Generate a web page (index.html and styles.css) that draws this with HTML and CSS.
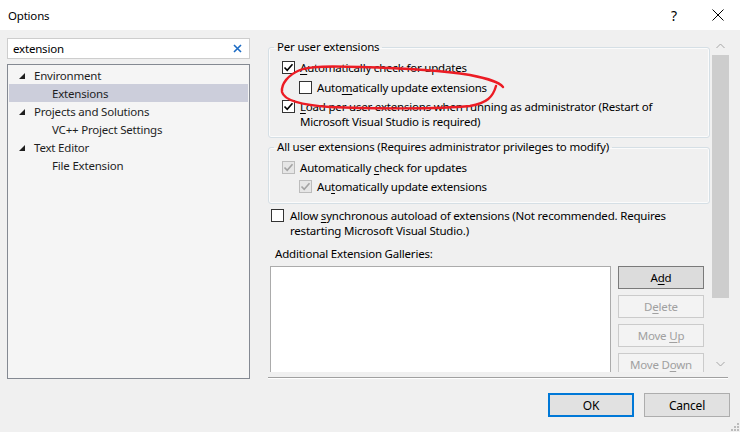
FILE: index.html
```html
<!DOCTYPE html>
<html>
<head>
<meta charset="utf-8">
<link rel="stylesheet" href="styles.css">
</head>
<body>
<div class="window">
  <div class="titlebar">
    <span class="title">Options</span>
    <span class="cap help">?</span>
    <span class="cap close"><svg width="12" height="12" viewBox="0 0 12 12"><path d="M0.5 0.5 L11.5 11.5 M11.5 0.5 L0.5 11.5" stroke="#000" stroke-width="1"/></svg></span>
  </div>
  <div class="main">
    <div class="left">
      <div class="search">
        <span class="search-text">extension</span>
        <svg class="clear" width="9" height="9" viewBox="0 0 9 9"><path d="M1 1 L8 8 M8 1 L1 8" stroke="#1c6bc4" stroke-width="1.6"/></svg>
      </div>
      <div class="tree">
        <div class="node"><svg class="tri" width="6" height="6" viewBox="0 0 6 6"><polygon points="6,0 6,6 0,6" fill="#1e1e1e"/></svg><span>Environment</span></div>
        <div class="node child selected"><span>Extensions</span></div>
        <div class="node"><svg class="tri" width="6" height="6" viewBox="0 0 6 6"><polygon points="6,0 6,6 0,6" fill="#1e1e1e"/></svg><span>Projects and Solutions</span></div>
        <div class="node child"><span>VC++ Project Settings</span></div>
        <div class="node"><svg class="tri" width="6" height="6" viewBox="0 0 6 6"><polygon points="6,0 6,6 0,6" fill="#1e1e1e"/></svg><span>Text Editor</span></div>
        <div class="node child"><span>File Extension</span></div>
      </div>
    </div>
    <div class="right">
      <div class="viewport">
        <div class="content">
          <fieldset class="group g1">
            <legend>Per user extensions</legend>
            <div class="row r1"><span class="cb checked"><svg viewBox="0 0 11 11" width="11" height="11"><path d="M1.5 5.5 L4.2 8.3 L9.5 2.2" fill="none" stroke="#000" stroke-width="1.6"/></svg></span><span class="lbl"><u>A</u>utomatically check for updates</span></div>
            <div class="row r2 sub"><span class="cb"></span><span class="lbl">Auto<u>m</u>atically update extensions</span></div>
            <div class="row r3"><span class="cb checked"><svg viewBox="0 0 11 11" width="11" height="11"><path d="M1.5 5.5 L4.2 8.3 L9.5 2.2" fill="none" stroke="#000" stroke-width="1.6"/></svg></span><span class="lbl"><u>L</u>oad per user extensions when running as administrator (Restart of<br>Microsoft Visual Studio is required)</span></div>
          </fieldset>
          <fieldset class="group g2">
            <legend>All user extensions (Requires administrator privileges to modify)</legend>
            <div class="row r1"><span class="cb disabled"><svg viewBox="0 0 11 11" width="11" height="11"><path d="M1.5 5.5 L4.2 8.3 L9.5 2.2" fill="none" stroke="#a3a3a3" stroke-width="1.6"/></svg></span><span class="lbl">Automatically <u>c</u>heck for updates</span></div>
            <div class="row r2 sub"><span class="cb disabled"><svg viewBox="0 0 11 11" width="11" height="11"><path d="M1.5 5.5 L4.2 8.3 L9.5 2.2" fill="none" stroke="#a3a3a3" stroke-width="1.6"/></svg></span><span class="lbl">Au<u>t</u>omatically update extensions</span></div>
          </fieldset>
          <div class="row sync"><span class="cb"></span><span class="lbl">Allow <u>s</u>ynchronous autoload of extensions (Not recommended. Requires<br>restarting Microsoft Visual Studio.)</span></div>
          <div class="galleries-label">Additional Extension Galleries:</div>
          <div class="galleries">
            <div class="listbox"></div>
            <div class="btncol">
              <div class="btn add"><span>A<u>d</u>d</span></div>
              <div class="btn off"><span>D<u>e</u>lete</span></div>
              <div class="btn off"><span>Move <u>U</u>p</span></div>
              <div class="btn off"><span>Move D<u>o</u>wn</span></div>
            </div>
          </div>
        </div>
        <div class="scrollbar">
          <div class="arrow"><svg width="9" height="6" viewBox="0 0 9 6"><path d="M0.5 5 L4.5 1 L8.5 5" fill="none" stroke="#a6a6a6" stroke-width="1"/></svg></div>
          <div class="thumb"></div>
          <div class="track"></div>
          <div class="arrow"><svg width="9" height="6" viewBox="0 0 9 6"><path d="M0.5 1 L4.5 5 L8.5 1" fill="none" stroke="#a6a6a6" stroke-width="1"/></svg></div>
        </div>
      </div>
      <div class="separator"></div>
    </div>
  </div>
  <div class="footer">
    <div class="dbtn ok"><span>OK</span></div>
    <div class="dbtn"><span>Cancel</span></div>
  </div>
  <svg class="grip" width="8" height="8" viewBox="0 0 8 8">
    <rect x="6" y="0" width="2" height="2" fill="#bcbcbc"/>
    <rect x="3" y="3" width="2" height="2" fill="#bcbcbc"/>
    <rect x="6" y="3" width="2" height="2" fill="#bcbcbc"/>
    <rect x="0" y="6" width="2" height="2" fill="#bcbcbc"/>
    <rect x="3" y="6" width="2" height="2" fill="#bcbcbc"/>
    <rect x="6" y="6" width="2" height="2" fill="#bcbcbc"/>
  </svg>
  <svg class="scribble" width="740" height="432" viewBox="0 0 740 432">
    <path d="M503 87 C499 82 490 79 470 75 C440 70 400 68 360 67 C330 66 310 66 300 70 C288 75 281 84 282 92 C284 100 300 105 330 107 C370 109 440 109 470 106 C487 103 493 97 496 86" fill="none" stroke="#ec1c24" stroke-width="2.4" stroke-linecap="round"/>
  </svg>
</div>
</body>
</html>
```

FILE: styles.css
```css
* { box-sizing: border-box; }
html, body { margin: 0; padding: 0; }
body {
  background: #f0f0f0;
  font-family: "Noto Sans", "Open Sans", sans-serif;
  font-size: 11.5px;
  letter-spacing: -0.2px;
  color: #000;
}
.window {
  position: relative;
  width: 740px;
  height: 432px;
  overflow: hidden;
  background: #f0f0f0;
}
u { text-decoration: underline; text-underline-offset: 2px; }

.titlebar {
  height: 30px;
  background: #fff;
  display: flex;
  align-items: center;
}
.title { padding-left: 8px; flex: 1; }
.cap {
  width: 46px;
  height: 30px;
  display: flex;
  align-items: center;
  justify-content: center;
}
.help { font-size: 14px; padding-left: 6px; }
.close { padding-left: 2px; }

.main {
  display: flex;
  height: 350px;
}
.left {
  width: 243px;
  margin-left: 7px;
  padding-top: 8px;
}
.search {
  height: 21px;
  background: #fff;
  border: 1px solid #cdcdcd;
  display: flex;
  align-items: center;
  padding-left: 5px;
  padding-right: 7px;
}
.search-text { flex: 1; color: #000; }
.tree {
  margin-top: 5px;
  height: 315px;
  background: #f5f5f5;
  border: 1px solid #848992;
  padding: 1px;
}
.node {
  height: 18px;
  display: flex;
  align-items: center;
  color: #1e1e1e;
  padding-left: 10px;
}
.node .tri { margin-right: 9px; margin-top: 1px; }
.node.child { padding-left: 43px; }
.node.selected { background: #cccedb; }

.right {
  width: 461px;
  margin-left: 18px;
  padding-top: 7px;
}
.viewport {
  display: flex;
  height: 335px;
}
.content {
  width: 444px;
  height: 335px;
  overflow: hidden;
}
.scrollbar {
  width: 17px;
  display: flex;
  flex-direction: column;
}
.arrow {
  height: 17px;
  display: flex;
  align-items: center;
  justify-content: center;
}
.thumb {
  height: 243px;
  margin-top: 1px;
  background: #cdcdcd;
}
.track { flex: 1; }
.separator {
  margin-top: 5px;
  width: 460px;
  border-top: 1px solid #a0a0a0;
  border-bottom: 1px solid #fff;
}

.group {
  width: 442px;
  margin: 0;
  padding: 0 0 8px 0;
  border: 1px solid #d5dfe5;
  border-radius: 3px;
  box-shadow: inset 0 0 0 1px #fbfbfb;
  min-width: 0;
}
.group legend {
  margin-left: 5px;
  padding: 0 3px;
  line-height: 16px;
  color: #000;
}
.g1 { margin-top: 2px; }
.g2 { margin-top: 1px; padding-bottom: 9px; }

.row {
  display: flex;
  align-items: flex-start;
  line-height: 15px;
  margin-left: 13px;
}
.row.sub { margin-left: 30px; }
.g1 .r1 { margin-top: 5px; }
.g1 .r2 { margin-top: 5px; }
.g1 .r3 { margin-top: 4px; }
.g2 .r1 { margin-top: 5px; }
.g2 .r2 { margin-top: 4px; }

.cb {
  width: 13px;
  height: 13px;
  margin-top: 1px;
  margin-right: 5px;
  flex: none;
  border: 1px solid #333;
  background: #fff;
  display: flex;
  align-items: center;
  justify-content: center;
}
.cb.disabled {
  border-color: #bcbcbc;
  background: #e6e6e6;
}
.lbl { white-space: nowrap; }

.row.sync {
  margin-left: 3px;
  margin-top: 4px;
}
.row.sync .cb { margin-right: 6px; }
.galleries-label {
  margin-top: 8px;
  margin-left: 7px;
  line-height: 15px;
}
.galleries {
  display: flex;
  margin-top: 5px;
  margin-left: 2px;
}
.listbox {
  width: 341px;
  height: 130px;
  background: #fff;
  border: 1px solid #ababab;
}
.btncol {
  margin-left: 7px;
  display: flex;
  flex-direction: column;
  gap: 6px;
}
.btn {
  width: 86px;
  height: 23px;
  display: flex;
  align-items: center;
  justify-content: center;
  border: 1px solid #adadad;
  background: #e1e1e1;
}
.btn.add {
  border-color: #7a7a7a;
  background: #dcdcdc;
}
.btn.off {
  border-color: #cbcbcb;
  background: #f3f3f3;
  color: #a0a0a0;
}

.footer {
  display: flex;
  justify-content: flex-end;
  gap: 10px;
  padding-right: 10px;
  padding-top: 13px;
}
.dbtn {
  width: 86px;
  height: 24px;
  display: flex;
  align-items: center;
  justify-content: center;
  background: #e1e1e1;
  border: 1px solid #adadad;
  font-size: 12px;
}
.dbtn.ok {
  border: 2px solid #0078d7;
}
.grip {
  position: absolute;
  right: 1px;
  bottom: 1px;
}
.scribble {
  position: absolute;
  left: 0;
  top: 0;
  pointer-events: none;
}
```
